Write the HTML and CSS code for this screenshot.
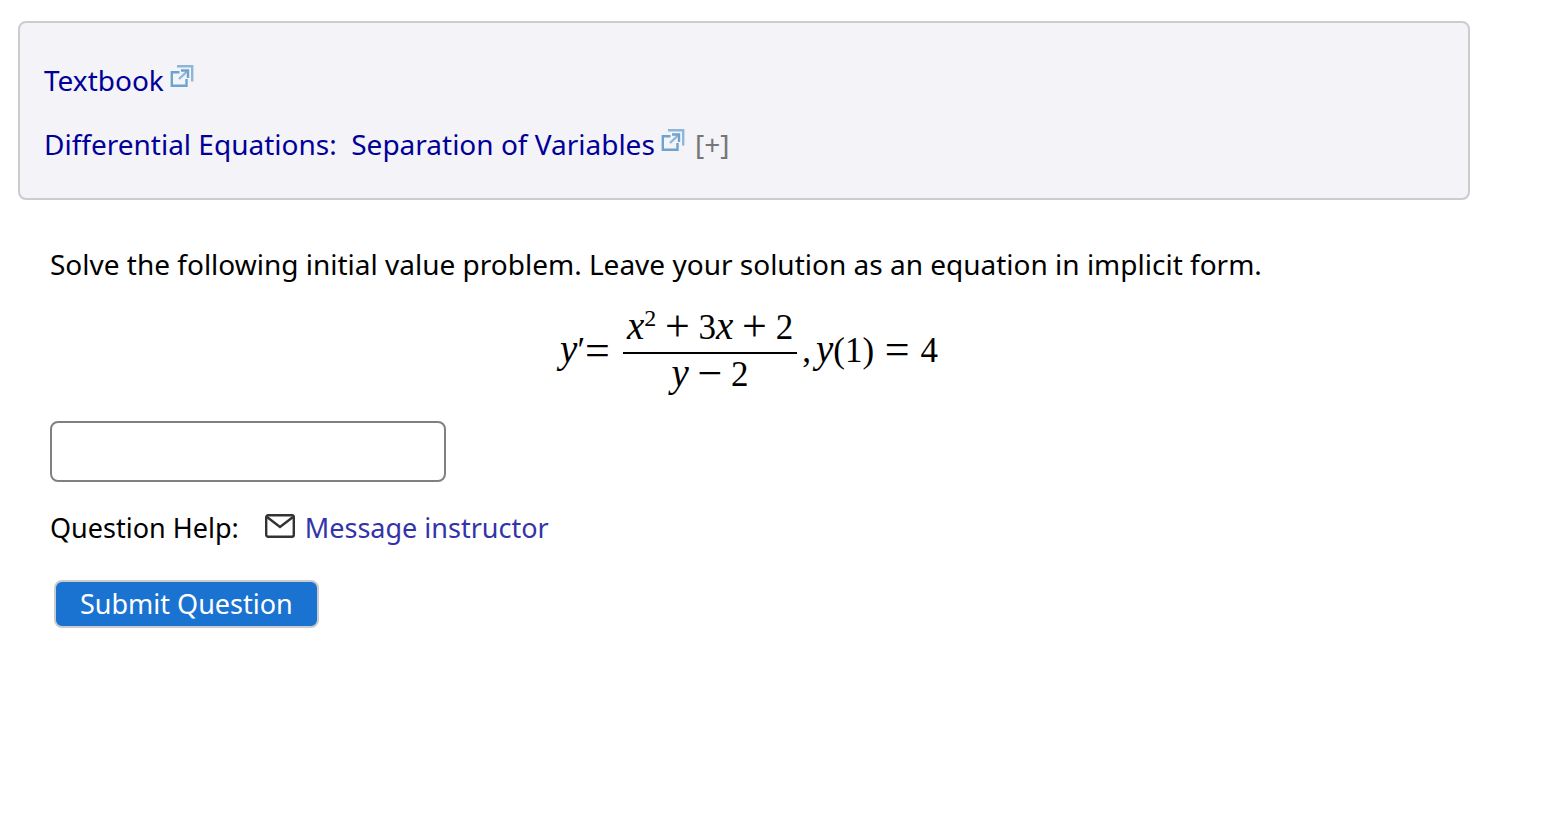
FILE: index.html
```
<!DOCTYPE html>
<html lang="en">

<head>
    <meta charset="UTF-8">
    <meta name="viewport" content="width=device-width, initial-scale=1.0">
    <title>Question</title>
    <link rel="stylesheet" href="styles.css">
</head>

<body>
    <svg class="sprite" aria-hidden="true">
        <symbol id="external" viewBox="0 0 24 24">
            <path d="M9.500 7.200H1.800V20.800H16.500V14" />
            <path class="light" d="M7 1.200H22.200V16.500" />
            <path class="light" d="M9 14L18 5.500" />
            <path d="M11 5.500H18V13" />
        </symbol>
    </svg>

    <div class="resources">
        <p><a href="#">Textbook<svg class="external"><use href="#external" /></svg></a></p>
        <p>
            <a href="#">Differential Equations:&nbsp; Separation of Variables<svg class="external"><use href="#external" /></svg></a>
            <button type="button" class="expand">[+]</button>
        </p>
    </div>

    <form class="question">
        <label for="answer">Solve the following initial value problem. Leave your solution as an equation in implicit form.</label>

        <div class="equation">
            <span><i>y</i>′</span>
            <span class="op equals">=</span>
            <span class="fraction">
                <span class="numerator"><i>x</i><sup>2</sup> <span class="op">+</span> 3<i>x</i> <span class="op">+</span> 2</span>
                <span class="denominator"><i>y</i> <span class="op">−</span> 2</span>
            </span>
            <span class="comma">,</span>
            <span><i>y</i>(1) <span class="op relation">=</span> 4</span>
        </div>

        <input type="text" id="answer" name="answer">

        <div class="help">
            <span>Question Help:</span>
            <a href="#">
                <svg class="mail" viewBox="0 0 30 24">
                    <rect x="1.200" y="1.200" width="27.600" height="21.600" rx="2" />
                    <path d="M2 3L15 13L28 3" />
                </svg>
                Message instructor
            </a>
        </div>

        <button type="submit" class="submit">Submit Question</button>
    </form>
</body>

</html>
```
FILE: styles.css
```
* {
    box-sizing: border-box;
    margin: 0;
    padding: 0;
}

body {
    padding: 21px 76px 21px 18px;
    background-color: #fff;
    color: #000;
    font-family: "Noto Sans", "Open Sans", sans-serif;
    font-size: 28px;
    line-height: 32px;
}

a {
    color: #000099;
    text-decoration: none;
}

.sprite {
    display: none;
}

.resources {
    display: flex;
    flex-direction: column;
    gap: 32px;
    padding: 41px 24px 38px;
    background-color: #f3f3f8;
    border: 2px solid #ccc;
    border-radius: 8px;
}

.external {
    width: 24px;
    height: 24px;
    margin-left: 6px;
    fill: none;
    stroke: #6da3cf;
    stroke-width: 2.4;
    vertical-align: 2px;
}

.light {
    stroke: #8db6d9;
}

.expand {
    margin-left: 3px;
    border: none;
    background: none;
    color: #777;
    font: inherit;
    cursor: pointer;
}

.question {
    display: flex;
    flex-direction: column;
    align-items: flex-start;
    padding: 48px 22px 0 32px;
}

.equation {
    display: flex;
    align-items: center;
    align-self: center;
    margin: 26px 0 25px;
    font-family: "Liberation Serif", serif;
    font-size: 35px;
    line-height: 44px;
}

.equation i {
    font-size: 39px;
    line-height: 0;
}

.fraction {
    display: flex;
    flex-direction: column;
    text-align: center;
}

.numerator {
    padding: 0 4px 2px;
    border-bottom: 2px solid #000;
}

.denominator {
    line-height: 42px;
}

.op {
    font-size: 44px;
    line-height: 0;
    vertical-align: -2px;
}

.equals {
    margin-right: 13px;
}

.relation {
    margin: 0 2px;
}

.comma {
    margin: 0 5px;
}

sup {
    font-size: 24px;
    line-height: 0;
}

#answer {
    width: 396px;
    height: 61px;
    padding: 8px;
    border: 2px solid #808080;
    border-radius: 8px;
    font: inherit;
}

.help {
    display: flex;
    gap: 26px;
    margin-top: 30px;
    font-size: 27px;
}

.help a {
    display: flex;
    align-items: baseline;
    gap: 10px;
    color: #3333aa;
}

.mail {
    width: 30px;
    height: 24px;
    fill: none;
    stroke: #333;
    stroke-width: 2.4;
}

.submit {
    margin: 36px 4px 0;
    padding: 6px 24px;
    border: 2px solid #ccc;
    border-radius: 8px;
    background-color: #1a73d1;
    color: #fff;
    font: inherit;
    font-size: 27px;
    cursor: pointer;
}
```
